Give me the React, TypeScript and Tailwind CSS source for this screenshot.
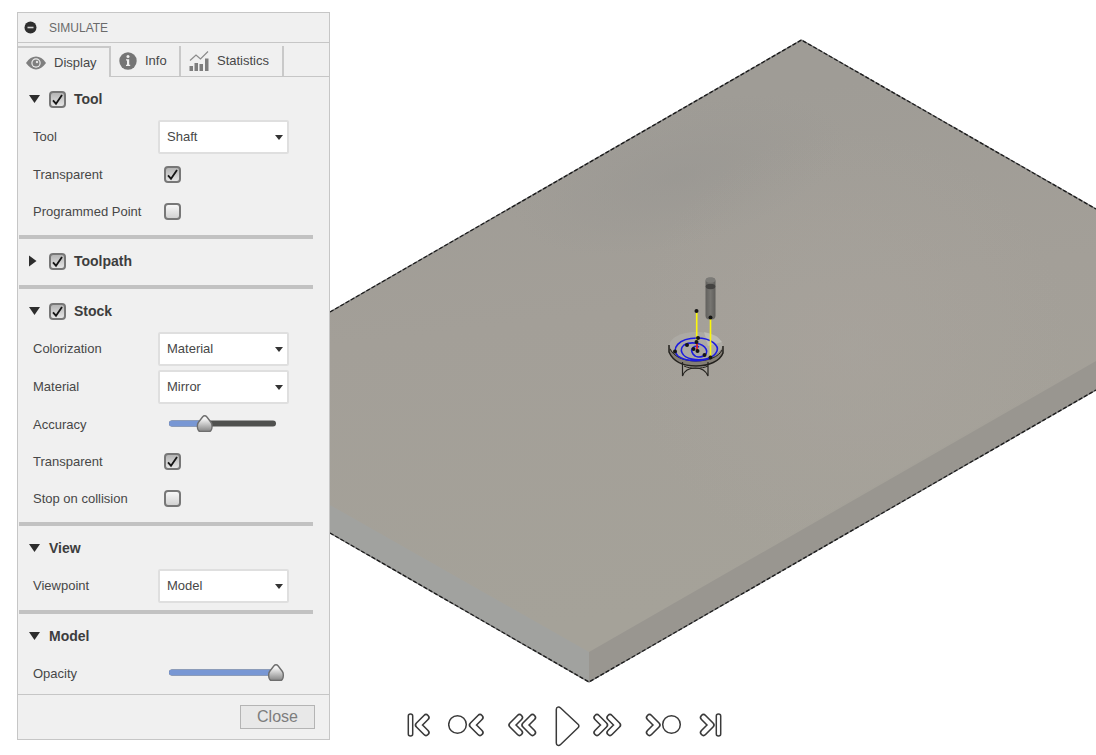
import { useId, useState } from "react";
import type { ReactNode } from "react";

const EyeIcon = () => (
  <svg width="20" height="14" viewBox="0 0 20 14" aria-hidden="true">
    <path d="M0 7C3 2.6 6.3 0.6 10 0.6S17 2.6 20 7c-3 4.400-6.300 6.400-10 6.400S3 11.400 0 7Z" fill="#7f7f7f" />
    <circle cx="10" cy="7" r="4.700" fill="#efefef" />
    <circle cx="10" cy="7" r="3.500" fill="#7f7f7f" />
    <circle cx="11" cy="6" r="1.200" fill="#e4e4e4" />
  </svg>
);

const InfoIcon = () => (
  <svg width="18" height="18" viewBox="0 0 18 18" aria-hidden="true">
    <circle cx="9" cy="9" r="8.700" fill="#757575" />
    <circle cx="9" cy="4.600" r="1.500" fill="#f0f0f0" />
    <path d="M7 7.200h3.200v5.600h1v1.200H7v-1.200h1V8.400H7Z" fill="#f0f0f0" />
  </svg>
);

const StatisticsIcon = () => (
  <svg width="20" height="20" viewBox="0 0 20 20" aria-hidden="true">
    <path d="M0.500 15H4v5H0.500ZM5.500 12H9v8H5.500ZM10.500 13H14v7h-3.500ZM16 7.500h3.500V20H16Z" fill="#7d7d7d" />
    <path d="m1 9.500 6-5.500 4.500 4L19 0.500" fill="none" stroke="#8b8b8b" strokeWidth="1.200" />
  </svg>
);

const tabs = [
  { name: "Display", icon: EyeIcon, className: "w-[93px]" },
  { name: "Info", icon: InfoIcon, className: "w-[70px]" },
  { name: "Statistics", icon: StatisticsIcon, className: "w-[103px]" },
];

type CheckboxProps = {
  id?: string;
  label?: string;
  defaultChecked?: boolean;
};

const Checkbox = ({ id, label, defaultChecked }: CheckboxProps) => (
  <span className="relative flex size-[17px] shrink-0">
    <input
      id={id}
      type="checkbox"
      aria-label={label}
      defaultChecked={defaultChecked}
      className="peer size-[17px] appearance-none rounded-[4px] border-2 border-[#777777] bg-linear-to-b from-[#f7f7f7] to-[#d2d2d2] checked:from-[#b5b5b5] checked:to-[#e6e6e6]"
    />
    <svg
      viewBox="0 0 17 17"
      className="pointer-events-none absolute inset-0 hidden peer-checked:block"
      aria-hidden="true"
    >
      <path d="m4 9.300 3 3.400L13 4" fill="none" stroke="#151515" strokeWidth="1.800" />
    </svg>
  </span>
);

type FieldProps = { label: string; id: string; children: ReactNode };

const Field = ({ label, id, children }: FieldProps) => (
  <div className="flex min-h-[37px] items-center py-[2px] pl-[14px]">
    <label htmlFor={id} className="w-[125px] shrink-0">
      {label}
    </label>
    {children}
  </div>
);

const SelectField = ({ label, options }: { label: string; options: string[] }) => {
  const id = useId();

  return (
    <Field label={label} id={id}>
      <div className="relative">
        <select
          id={id}
          className="block h-[34px] w-[131px] appearance-none rounded-[2px] border-2 border-[#dfdfdf] bg-white px-[7px]"
        >
          {options.map((option) => (
            <option key={option}>{option}</option>
          ))}
        </select>
        <svg
          width="8"
          height="5"
          viewBox="0 0 8 5"
          className="pointer-events-none absolute top-[15px] right-[6px]"
          aria-hidden="true"
        >
          <path d="M0 0h8L4 5Z" fill="#333" />
        </svg>
      </div>
    </Field>
  );
};

const CheckField = ({ label, checked }: { label: string; checked?: boolean }) => {
  const id = useId();

  return (
    <Field label={label} id={id}>
      <div className="pl-[6px]">
        <Checkbox id={id} defaultChecked={checked} />
      </div>
    </Field>
  );
};

const SliderField = ({ label, initial }: { label: string; initial: number }) => {
  const id = useId();
  const [value, setValue] = useState(initial);
  const thumb = 10 + value * 1.080;

  return (
    <Field label={label} id={id}>
      <div className="relative h-5 w-[131px]">
        <svg width="131" height="20" viewBox="0 0 131 20" aria-hidden="true">
          <defs>
            <linearGradient id={`${id}-thumb`} x2="0" y2="1">
              <stop offset="0.200" stopColor="#f4f4f4" />
              <stop offset="1" stopColor="#858585" />
            </linearGradient>
          </defs>
          <path d="M14 8.500H115" stroke="#50514f" strokeWidth="6" strokeLinecap="round" />
          <path d={`M14 8.500H${thumb}`} stroke="#7897d4" strokeWidth="6" strokeLinecap="round" />
          <path
            transform={`translate(${thumb - 8} 0)`}
            d="M8 0.800C9 0.800 9.600 1.300 10.200 2l4.200 5.500c1.300 1.800 1.300 6-.2 8q-.7.900-1.800.9H3.600q-1.100 0-1.800-.9C.3 13.500.3 9.300 1.600 7.500L5.800 2C6.400 1.300 7 .8 8 .8Z"
            fill={`url(#${id}-thumb)`}
            stroke="#6e6e6e"
            strokeWidth="1.400"
          />
        </svg>
        <input
          id={id}
          type="range"
          value={value}
          onChange={(e) => setValue(Number(e.target.value))}
          className="absolute inset-0 w-full opacity-0"
        />
      </div>
    </Field>
  );
};

type SectionProps = {
  title: string;
  checkable?: boolean;
  defaultOpen?: boolean;
  children?: ReactNode;
};

const Section = ({ title, checkable, defaultOpen, children }: SectionProps) => {
  const [open, setOpen] = useState(defaultOpen);

  return (
    <section className="border-b-4 border-[#c2c2c2] pt-[3px] pb-[5px] last:border-b-0 last:pb-[2px]">
      <div className="flex h-[38px] items-center pl-[9px]">
        <button
          type="button"
          aria-label={`Toggle ${title}`}
          aria-expanded={!!open}
          onClick={() => setOpen(!open)}
          className="w-[21px]"
        >
          <svg width="12" height="12" viewBox="0 0 12 12" aria-hidden="true">
            <path d={open ? "M1 2h11L6.500 10Z" : "M1 0.500v11L8.500 6Z"} fill="#2d2d2d" />
          </svg>
        </button>
        {checkable && (
          <span className="mr-2">
            <Checkbox label={`Show ${title}`} defaultChecked />
          </span>
        )}
        <h2 className="text-sm font-bold text-[#3d3d3d]">{title}</h2>
      </div>
      {open && children}
    </section>
  );
};

const SimulatePanel = () => {
  const [activeTab, setActiveTab] = useState("Display");

  return (
    <aside className="mt-3 ml-[17px] w-[313px] shrink-0 self-start border border-[#c6c6c6] bg-[#f0f0f0] text-[13px] text-[#474747]">
      <header className="flex h-[30px] items-center gap-3 border-b border-[#c6c6c6] pl-[6px]">
        <button type="button" aria-label="Collapse panel">
          <svg width="13" height="13" viewBox="0 0 13 13" aria-hidden="true">
            <circle cx="6.500" cy="6.500" r="6" fill="#2e2e2e" />
            <path d="M3.500 6.500h6" stroke="#d4d4d4" strokeWidth="1.600" />
          </svg>
        </button>
        <h1 className="text-xs text-[#6a6a6a]">SIMULATE</h1>
      </header>
      <div role="tablist" className="flex h-[34px] border-b border-[#c6c6c6] pt-[3px]">
        {tabs.map(({ name, icon: Icon, className }) => (
          <button
            key={name}
            type="button"
            role="tab"
            aria-selected={activeTab === name}
            onClick={() => setActiveTab(name)}
            className={`${className} flex items-center gap-2 border-r-2 border-[#c9c9c9] pl-2 aria-selected:-mb-px aria-selected:border-t-2 aria-selected:bg-[#f0f0f0]`}
          >
            <Icon />
            {name}
          </button>
        ))}
      </div>
      <div className="mr-4 ml-[1px]">
        <Section title="Tool" checkable defaultOpen>
          <SelectField label="Tool" options={["Shaft", "Holder", "Off"]} />
          <CheckField label="Transparent" checked />
          <CheckField label="Programmed Point" />
        </Section>
        <Section title="Toolpath" checkable />
        <Section title="Stock" checkable defaultOpen>
          <SelectField label="Colorization" options={["Material", "Operation"]} />
          <SelectField label="Material" options={["Mirror", "Steel"]} />
          <SliderField label="Accuracy" initial={34} />
          <CheckField label="Transparent" checked />
          <CheckField label="Stop on collision" />
        </Section>
        <Section title="View" defaultOpen>
          <SelectField label="Viewpoint" options={["Model", "Tool"]} />
        </Section>
        <Section title="Model" defaultOpen>
          <SliderField label="Opacity" initial={100} />
        </Section>
      </div>
      <footer className="flex justify-end border-t border-[#c6c6c6] pt-[10px] pr-[14px] pb-[10px]">
        <button
          type="button"
          className="h-6 w-[75px] border border-[#b4b4b4] bg-[#e8e8e8] text-base leading-5 text-[#7d7d7d]"
        >
          Close
        </button>
      </footer>
    </aside>
  );
};

const StockModel = () => (
  <svg viewBox="330 0 766 706" className="block h-auto w-full" role="img" aria-label="Stock model">
    <defs>
      <linearGradient id="top-face" gradientUnits="userSpaceOnUse" x1="700" y1="100" x2="760" y2="600">
        <stop offset="0" stopColor="#9f9c96" />
        <stop offset="0.400" stopColor="#a39f98" />
        <stop offset="1" stopColor="#a5a299" />
      </linearGradient>
      <radialGradient id="shade" gradientUnits="userSpaceOnUse" cx="0" cy="0" r="1" gradientTransform="translate(680 175) rotate(-15) scale(170 70)">
        <stop offset="0" stopColor="#989692" stopOpacity="0.600" />
        <stop offset="1" stopColor="#989692" stopOpacity="0" />
      </radialGradient>
      <radialGradient id="glow" gradientUnits="userSpaceOnUse" cx="850" cy="350" r="220">
        <stop offset="0" stopColor="#a9a49d" stopOpacity="0.600" />
        <stop offset="1" stopColor="#a9a49d" stopOpacity="0" />
      </radialGradient>
      <linearGradient id="shaft">
        <stop offset="0" stopColor="#5e5d5a" />
        <stop offset="0.500" stopColor="#74736f" />
        <stop offset="1" stopColor="#5b5a57" />
      </linearGradient>
    </defs>
    <path d="M330 500 589 640V682L330 533Z" fill="#a1a29f" />
    <path d="M589 640 1096 355V390L589 682Z" fill="#999690" />
    <path d="M330 312 801.500 40 1096 209V361L589 652 330 505Z" fill="url(#top-face)" />
    <path d="M335 312 801.500 42 1094 209V359L589 650 335 505Z" fill="url(#shade)" />
    <path d="M335 312 801.500 42 1096 209V359L589 650 335 505Z" fill="url(#glow)" />
    <g fill="none" stroke="#777" strokeWidth="1.300">
      <path d="M330 312 801.500 40 1096 209M330 533 589 682 1096 390" />
      <path d="M330 312 801.500 40 1096 209M330 533 589 682 1096 390" stroke="#1c1c1c" strokeDasharray="4 2" />
    </g>
    {/* pocket and the part below it */}
    <ellipse cx="696" cy="346" rx="27" ry="14" fill="#b3b1ac" fillOpacity="0.600" />
    <path d="M704 332q13 2 18 10l-14 4Z" fill="#c7c6c2" fillOpacity="0.600" />
    <path d="M669 345v7c4 9 14 14 27 14s24-5 27-13v-7c-4 9-14 14-27 14s-24-6-27-15Z" fill="#716c63" fillOpacity="0.650" />
    <g fill="none" stroke="#25231f" strokeWidth="1.500">
      <path d="M669 345v7c4 9 14 14 27 14s24-5 27-13v-7" />
      <path d="M670 349c4 8 14 12 26 12s23-4 26-11" strokeWidth="1" />
      <path d="M682.500 362v14c2-6 7-8 13-8s10 2 12.500 8v-14" strokeWidth="1.200" />
      <path d="M684 366c6 3 18 3 24 0" strokeWidth="1" />
    </g>
    <path
      d="M711 357C704 362 685 362 678 356C671 349 678 338 697 338C712 338 719 346 717 351C714 359 701 361 692 359C681 357 679 349 684 345C691 341 703 343 706 349C710 356 697 360 693 354C689 348 695 345 699 347"
      fill="none"
      stroke="#1b1be0"
      strokeWidth="1.600"
    />
    <path d="M697 342v10" stroke="#d4202c" strokeWidth="1.800" />
    <rect x="705.500" y="277.500" width="10" height="42" rx="4" fill="url(#shaft)" fillOpacity="0.950" />
    <ellipse cx="710.500" cy="280" rx="4.800" ry="2.600" fill="#7c7b77" />
    <ellipse cx="710.500" cy="286.500" rx="4.800" ry="2.800" fill="#444341" />
    <path d="M696.700 311v29M710.500 318v39" stroke="#fbf70a" strokeWidth="1.600" />
    <g fill="#151515">
      <circle cx="696.500" cy="311" r="2" />
      <circle cx="710.500" cy="317.500" r="2" />
      <circle cx="698" cy="338" r="2" />
      <circle cx="696.500" cy="342" r="2" />
      <circle cx="687" cy="345" r="2" />
      <circle cx="675" cy="351.500" r="2" />
      <circle cx="693.500" cy="349" r="2" />
      <circle cx="697.500" cy="351" r="2" />
      <circle cx="704.500" cy="355" r="2" />
      <circle cx="710.500" cy="357.500" r="2" />
    </g>
  </svg>
);

// a hollow stroke: dark line with a narrower white one on top
const Outline = ({ d }: { d: string }) => (
  <g fill="none" strokeLinecap="round" strokeLinejoin="round">
    <path d={d} stroke="#3a3a3a" strokeWidth="7.400" />
    <path d={d} stroke="#fff" strokeWidth="4.200" />
  </g>
);

const Ring = ({ cx }: { cx: number }) => (
  <circle cx={cx} cy="18.500" r="8.800" fill="none" stroke="#3a3a3a" strokeWidth="1.500" />
);

const controls = [
  {
    label: "Go to start",
    width: 29,
    icon: (
      <>
        <Outline d="M19 11.500l-7.500 7.500 7.500 7.500" />
        <path d="M1.300 10q0-2 2.200-2t2.200 2v18q0 2-2.200 2t-2.200-2Z" fill="#fff" stroke="#3a3a3a" strokeWidth="1.500" />
      </>
    ),
  },
  {
    label: "Previous operation",
    width: 42,
    icon: (
      <>
        <Ring cx={9.500} />
        <Outline d="M32 11.500l-7.500 7.500 7.500 7.500" />
      </>
    ),
  },
  {
    label: "Step backward",
    width: 41,
    icon: (
      <>
        <Outline d="M17.500 11.500l-7.500 7.500 7.500 7.500" />
        <Outline d="M30.500 11.500l-7.500 7.500 7.500 7.500" />
      </>
    ),
  },
  {
    label: "Play",
    width: 25,
    icon: (
      <path
        d="M1.300 3.500C1.300.8 3.800.3 5.600 2L23 18.300q1.800 1.700 0 3.400L5.600 38.500C3.800 40.200 1.300 39.700 1.300 37Z"
        fill="#fff"
        stroke="#3a3a3a"
        strokeWidth="1.500"
      />
    ),
  },
  {
    label: "Step forward",
    width: 41,
    icon: (
      <>
        <Outline d="M5 11.500l7.500 7.500-7.500 7.500" />
        <Outline d="M18 11.500l7.500 7.500-7.500 7.500" />
      </>
    ),
  },
  {
    label: "Next operation",
    width: 42,
    icon: (
      <>
        <Outline d="M4.500 11.500l7.500 7.500-7.500 7.500" />
        <Ring cx={26.500} />
      </>
    ),
  },
  {
    label: "Go to end",
    width: 23,
    icon: (
      <>
        <Outline d="M4.500 11.500l7.500 7.500-7.500 7.500" />
        <path d="M17.300 10q0-2 2.200-2t2.200 2v18q0 2-2.200 2t-2.200-2Z" fill="#fff" stroke="#3a3a3a" strokeWidth="1.500" />
      </>
    ),
  },
];

const PlaybackControls = () => (
  <div className="flex gap-3 pb-2 pl-[77px]">
    {controls.map(({ label, width, icon }) => (
      <button key={label} type="button" aria-label={label}>
        <svg width={width} height="41" viewBox={`0 0 ${width} 41`} aria-hidden="true">
          {icon}
        </svg>
      </button>
    ))}
  </div>
);

const App = () => {
  return (
    <div className="flex min-h-screen bg-white font-['Liberation_Sans',Arial,sans-serif]">
      <SimulatePanel />
      <main className="min-w-0 flex-1">
        <StockModel />
        <PlaybackControls />
      </main>
    </div>
  );
};

export default App;
